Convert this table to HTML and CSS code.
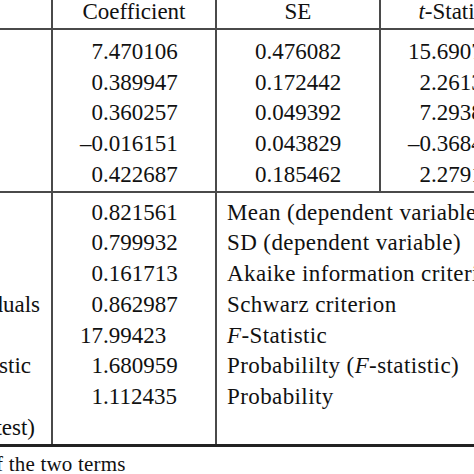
FILE: index.html
```html
<!DOCTYPE html>
<html lang="en">
<head>
    <meta charset="UTF-8">
    <title>Regression results</title>
    <link rel="stylesheet" href="styles.css">
</head>
<body>
    <table class="results">
        <colgroup>
            <col class="c-label">
            <col class="c-num">
            <col class="c-num">
            <col class="c-num">
        </colgroup>
        <thead>
            <tr>
                <th class="lbl">Variable</th>
                <th class="v">Coefficient</th>
                <th class="v">SE</th>
                <th><i>t</i>-Statistic</th>
            </tr>
        </thead>
        <tbody class="coef">
            <tr>
                <td class="lbl">Constant</td>
                <td class="dec v"><span class="int">7</span>.470106</td>
                <td class="mid v">0.476082</td>
                <td class="dec"><span class="int">15</span>.690790</td>
            </tr>
            <tr>
                <td class="lbl">log K</td>
                <td class="dec v"><span class="int">0</span>.389947</td>
                <td class="mid v">0.172442</td>
                <td class="dec"><span class="int">2</span>.261323</td>
            </tr>
            <tr>
                <td class="lbl">log L</td>
                <td class="dec v"><span class="int">0</span>.360257</td>
                <td class="mid v">0.049392</td>
                <td class="dec"><span class="int">7</span>.293841</td>
            </tr>
            <tr>
                <td class="lbl">log H</td>
                <td class="dec v"><span class="int">&ndash;0</span>.016151</td>
                <td class="mid v">0.043829</td>
                <td class="dec"><span class="int">&ndash;0</span>.368494</td>
            </tr>
            <tr>
                <td class="lbl">log K &times; log L</td>
                <td class="dec v"><span class="int">0</span>.422687</td>
                <td class="mid v">0.185462</td>
                <td class="dec"><span class="int">2</span>.279104</td>
            </tr>
        </tbody>
        <tbody class="fit">
            <tr>
                <td class="lbl">R-squared</td>
                <td class="dec v"><span class="int">0</span>.821561</td>
                <td class="desc" colspan="2">Mean (dependent variable)</td>
            </tr>
            <tr>
                <td class="lbl">Adjusted R-squared</td>
                <td class="dec v"><span class="int">0</span>.799932</td>
                <td class="desc" colspan="2">SD (dependent variable)</td>
            </tr>
            <tr>
                <td class="lbl">SE of regression</td>
                <td class="dec v"><span class="int">0</span>.161713</td>
                <td class="desc" colspan="2">Akaike information criterion</td>
            </tr>
            <tr>
                <td class="lbl end end-11">Sum squared residuals</td>
                <td class="dec v"><span class="int">0</span>.862987</td>
                <td class="desc" colspan="2">Schwarz criterion</td>
            </tr>
            <tr>
                <td class="lbl">Log likelihood</td>
                <td class="dec v"><span class="int">17</span>.99423</td>
                <td class="desc" colspan="2"><i>F</i>-Statistic</td>
            </tr>
            <tr>
                <td class="lbl end end-20">Durbin-Watson statistic</td>
                <td class="dec v"><span class="int">1</span>.680959</td>
                <td class="desc" colspan="2">Probabililty (<i>F</i>-statistic)</td>
            </tr>
            <tr>
                <td class="lbl">Ramsey RESET</td>
                <td class="dec v"><span class="int">1</span>.112435</td>
                <td class="desc" colspan="2">Probability</td>
            </tr>
            <tr>
                <td class="lbl end end-16">(specification test)</td>
                <td class="v"></td>
                <td class="desc" colspan="2"></td>
            </tr>
        </tbody>
    </table>
    <p class="note">D is the product of the two terms</p>
</body>
</html>
```

FILE: styles.css
```css
html,body{margin:0;background:#fff;}
body{
    width:474px;
    height:474px;
    overflow:hidden;
    font-family:"Liberation Serif","Times New Roman",serif;
    color:#111;
}

.results{
    border-collapse:collapse;
    table-layout:fixed;
    width:744px;
    margin:-3px 0 0 -200px;
    font-size:23px;
    line-height:30.75px;
}
.c-label{width:252px;}
.c-num{width:164px;}

th,td{padding:0;white-space:nowrap;font-weight:normal;text-align:left;vertical-align:middle;}
thead th{text-align:center;border-bottom:2px solid #4a4a4a;}
thead th.lbl{text-align:left;}

.lbl{padding-left:12px;overflow:hidden;border-right:2px solid #4a4a4a;}
.v{border-right:2px solid #4a4a4a;}

.end{text-align:right;padding-left:0;}
.end-11{padding-right:11px;}
.end-16{padding-right:16px;}
.end-20{padding-right:20px;}

.dec{padding-left:27px;}
.int{display:inline-block;width:23px;text-align:right;}
.mid{text-align:center;}
.desc{padding-left:10px;letter-spacing:0.4px;}

.coef tr:first-child td{padding-top:7px;}
.fit{border-top:2px solid #4a4a4a;border-bottom:3px solid #222;}
.fit tr:first-child td{padding-top:5px;}

.note{margin:5px 0 0 -158px;font-size:21px;line-height:24px;white-space:nowrap;letter-spacing:0.2px;}
```
